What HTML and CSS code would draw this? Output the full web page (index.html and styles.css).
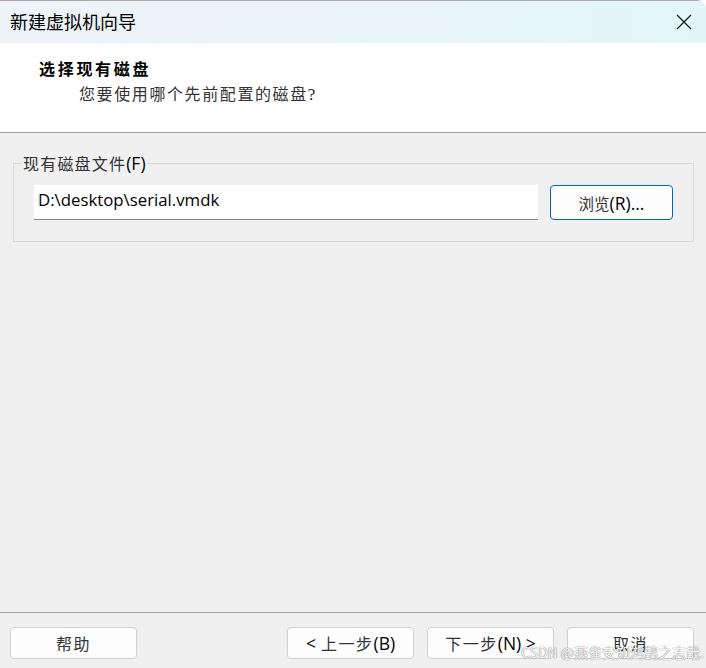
FILE: index.html
```html
<!DOCTYPE html>
<html lang="zh-CN">
<head>
<meta charset="utf-8">
<title>新建虚拟机向导</title>
<link rel="stylesheet" href="styles.css">
</head>
<body>
<div class="window">
  <div class="titlebar">
    <span class="title">新建虚拟机向导</span>
    <span class="close">
      <svg width="16" height="16" viewBox="0 0 16 16"><path d="M1 1 L15 15 M15 1 L1 15" stroke="#1a1a1a" stroke-width="1.3" fill="none"/></svg>
    </span>
  </div>
  <div class="header">
    <div class="heading">选择现有磁盘</div>
    <div class="subheading">您要使用哪个先前配置的磁盘<span class="q">?</span></div>
  </div>
  <div class="content">
    <fieldset class="group">
      <legend class="legend">现有磁盘文件<span class="latin">(F)</span></legend>
      <div class="row">
        <div class="input">D:\desktop\serial.vmdk</div>
        <button class="btn btn-primary">浏览<span class="latin">(R)...</span></button>
      </div>
    </fieldset>
  </div>
  <div class="footer">
    <button class="btn btn-foot">帮助</button>
    <div class="nav">
      <button class="btn btn-foot"><span class="latin">&lt;</span> 上一步<span class="latin">(B)</span></button>
      <button class="btn btn-foot">下一步<span class="latin">(N) &gt;</span></button>
      <button class="btn btn-foot">取消</button>
    </div>
    <span class="watermark">CSDN @燕雀安知鸿鹄之志哉.</span>
  </div>
</div>
</body>
</html>
```
FILE: styles.css
```css
html, body {
  margin: 0;
  padding: 0;
  background: #ffffff;
}
body {
  font-family: "Noto Sans CJK SC", sans-serif;
  width: 706px;
  height: 668px;
  overflow: hidden;
}
.latin {
  font-family: "Open Sans", "Noto Sans", sans-serif;
  letter-spacing: 0;
  font-size: 17.5px;
  color: #000;
}
.window {
  width: 706px;
  height: 668px;
  display: flex;
  flex-direction: column;
  background: #f0f0f0;
  border-top-right-radius: 9px;
  overflow: hidden;
  position: relative;
}
.titlebar {
  height: 42px;
  border-top: 1px solid #a8a8a8;
  background: linear-gradient(90deg, #eef3f8 0%, #e8f4f8 60%, #e2f6f8 100%);
  display: flex;
  align-items: center;
  justify-content: space-between;
  padding: 0 14px 0 10px;
  flex-shrink: 0;
}
.title {
  font-size: 18px;
  color: #000;
  line-height: 22px;
  margin-top: -2px;
}
.close {
  display: flex;
  width: 16px;
  height: 16px;
  margin-top: -1px;
}
.header {
  background: #ffffff;
  border-bottom: 1px solid #a0a0a0;
  box-sizing: border-box;
  height: 90px;
  padding: 14px 0 0 39px;
  flex-shrink: 0;
}
.heading {
  font-size: 16px;
  font-weight: 700;
  letter-spacing: 2.7px;
  line-height: 22px;
  color: #000;
}
.subheading {
  font-size: 16px;
  letter-spacing: 1.6px;
  line-height: 22px;
  color: #333;
  margin-top: 3px;
  padding-left: 40px;
}
.q {
  font-family: "Liberation Serif", serif;
  font-size: 17px;
  color: #222;
}
.content {
  flex: 1;
  padding: 20px 12px 0 13px;
}
.group {
  margin: 0;
  padding: 0;
  border: 1px solid #dadada;
  min-width: 0;
}
.legend {
  margin-left: 8px;
  padding: 0 1px;
  font-size: 16px;
  letter-spacing: 1.2px;
  line-height: 20px;
  color: #333;
}
.row {
  display: flex;
  gap: 12px;
  padding: 12px 20px 21px 20px;
}
.input {
  flex: 1;
  height: 35px;
  box-sizing: border-box;
  background: #ffffff;
  border-bottom: 1px solid #868686;
  padding-left: 4px;
  font-family: "Open Sans", "Noto Sans", sans-serif;
  font-size: 16.8px;
  line-height: 30px;
  color: #000;
}
.btn {
  font-family: "Noto Sans CJK SC", sans-serif;
  font-size: 16px;
  letter-spacing: 1.5px;
  color: #333;
  background: #fdfdfd;
  border: 1px solid #d0d0d0;
  border-radius: 4px;
  padding: 0;
  box-sizing: border-box;
  cursor: default;
}
.btn-primary {
  width: 123px;
  height: 35px;
  border-color: #0067c0;
  font-size: 15.5px;
  letter-spacing: 0;
}
.footer {
  height: 56px;
  box-sizing: border-box;
  border-top: 1px solid #a0a0a0;
  display: flex;
  justify-content: space-between;
  align-items: flex-start;
  padding: 14px 12px 0 10px;
  flex-shrink: 0;
  position: relative;
}
.nav {
  display: flex;
  gap: 13px;
}
.btn-foot {
  width: 127px;
  height: 32px;
  line-height: 20px;
}
.watermark {
  position: absolute;
  left: 521px;
  top: 31px;
  font-family: "Noto Sans CJK SC", sans-serif;
  font-size: 14px;
  line-height: 17px;
  color: rgba(255, 255, 255, 0.92);
  text-shadow: 0 0 1px #8a8a8a, 0 0 1px #8a8a8a;
  white-space: nowrap;
}
```
